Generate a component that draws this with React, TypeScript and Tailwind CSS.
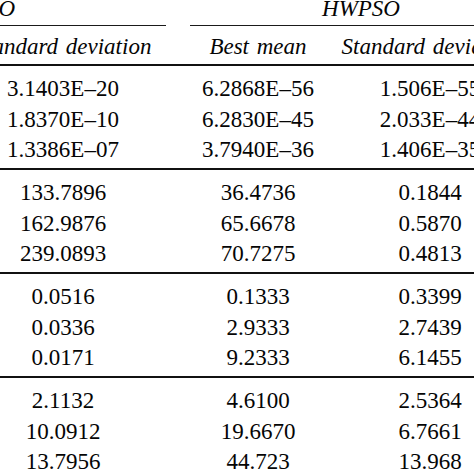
const groups = [
  [
    ["3.1403E\u201320", "6.2868E\u201356", "1.506E\u201355"],
    ["1.8370E\u201310", "6.2830E\u201345", "2.033E\u201344"],
    ["1.3386E\u201307", "3.7940E\u201336", "1.406E\u201335"],
  ],
  [
    ["133.7896", "36.4736", "0.1844"],
    ["162.9876", "65.6678", "0.5870"],
    ["239.0893", "70.7275", "0.4813"],
  ],
  [
    ["0.0516", "0.1333", "0.3399"],
    ["0.0336", "2.9333", "2.7439"],
    ["0.0171", "9.2333", "6.1455"],
  ],
  [
    ["2.1132", "4.6100", "2.5364"],
    ["10.0912", "19.6670", "6.7661"],
    ["13.7956", "44.723", "13.968"],
  ],
];

const widths = ["w-[200px]", "w-[190px]", "w-[154px]"];

const Row = ({ cells, italic }: { cells: string[]; italic?: boolean }) => (
  <div className={`flex -ml-[37px] ${italic ? "italic" : ""}`}>
    {cells.map((c, i) => (
      <div key={i} className={`${widths[i]} shrink-0 flex justify-center whitespace-nowrap`}>
        {c}
      </div>
    ))}
  </div>
);

export default function App() {
  return (
    <div
      className="w-[474px] h-[474px] overflow-hidden bg-white text-[#050505] text-[23px]"
      style={{ fontFamily: '"Liberation Serif", "Times New Roman", serif' }}
    >
      {/* top header: algorithm groups */}
      <div className="flex -ml-[190px] italic leading-[18.5px]">
        <div className="w-[368px] shrink-0 flex flex-col">
          <div className="flex justify-center whitespace-nowrap pb-[6.5px]">PSO</div>
          <div className="h-px bg-[#1a1a1a] mr-[12px]" />
        </div>
        <div className="w-[366px] shrink-0 flex flex-col">
          <div className="flex justify-center whitespace-nowrap pb-[6.5px]">HWPSO</div>
          <div className="h-px bg-[#1a1a1a] ml-[12px]" />
        </div>
      </div>

      {/* column names */}
      <div className="pt-[6px] pb-[2px] leading-[30px] [word-spacing:2px]">
        <Row cells={["Standard deviation", "Best mean", "Standard deviation"]} italic />
      </div>
      <div className="h-[2px] bg-[#111]" />

      {groups.map((g, gi) => (
        <div key={gi}>
          <div className="pt-[8px] pb-[2.5px] leading-[30.5px]">
            {g.map((r, ri) => (
              <Row key={ri} cells={r} />
            ))}
          </div>
          {gi < groups.length - 1 && <div className="h-[2px] bg-[#111]" />}
        </div>
      ))}
    </div>
  );
}
